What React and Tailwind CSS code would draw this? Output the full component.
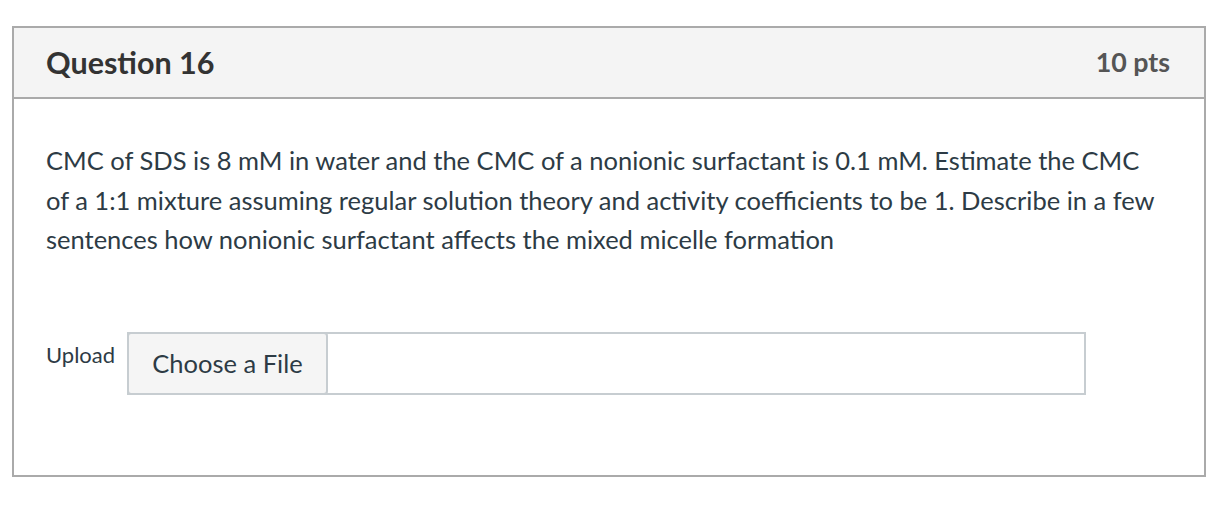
export default function App() {
  return (
    <div className="bg-white w-[1218px] h-[508px] pt-[26px] pl-[12px]" style={{ fontFamily: "Lato, 'Liberation Sans', sans-serif" }}>
      <div className="w-[1194px] h-[451px] border-2 border-[#aaaaaa] flex flex-col">
        <div className="h-[71px] bg-[#f4f4f4] border-b-2 border-[#aaaaaa] flex items-center justify-between pl-[32px] pr-[34px]">
          <h2 className="text-[30.5px] font-bold text-[#333333]">Question 16</h2>
          <div className="text-[26.8px] font-bold text-[#555555]">10 pts</div>
        </div>
        <div className="pl-[32px] pr-[48px] pt-[42px]">
          <p className="text-[25.5px] leading-[39.5px] text-[#2d3b45]">
            CMC of SDS is 8 mM in water and the CMC of a nonionic surfactant is 0.1 mM. Estimate the CMC of a 1:1 mixture assuming regular solution theory and activity coefficients to be 1. Describe in a few sentences how nonionic surfactant affects the mixed micelle formation
          </p>
          <div className="flex items-start mt-[72px]">
            <span className="text-[22px] text-[#2d3b45] w-[81px] leading-[32px] pt-[7px]">Upload</span>
            <div className="w-[959px] h-[63px] border-2 border-[#c7cdd1] flex">
              <button className="h-[63px] w-[201px] -mt-[2px] -ml-[2px] border-2 border-[#c7cdd1] rounded-[4px] bg-[#f5f5f5] text-[25.5px] text-[#2d3b45]">
                Choose a File
              </button>
            </div>
          </div>
        </div>
      </div>
    </div>
  );
}
